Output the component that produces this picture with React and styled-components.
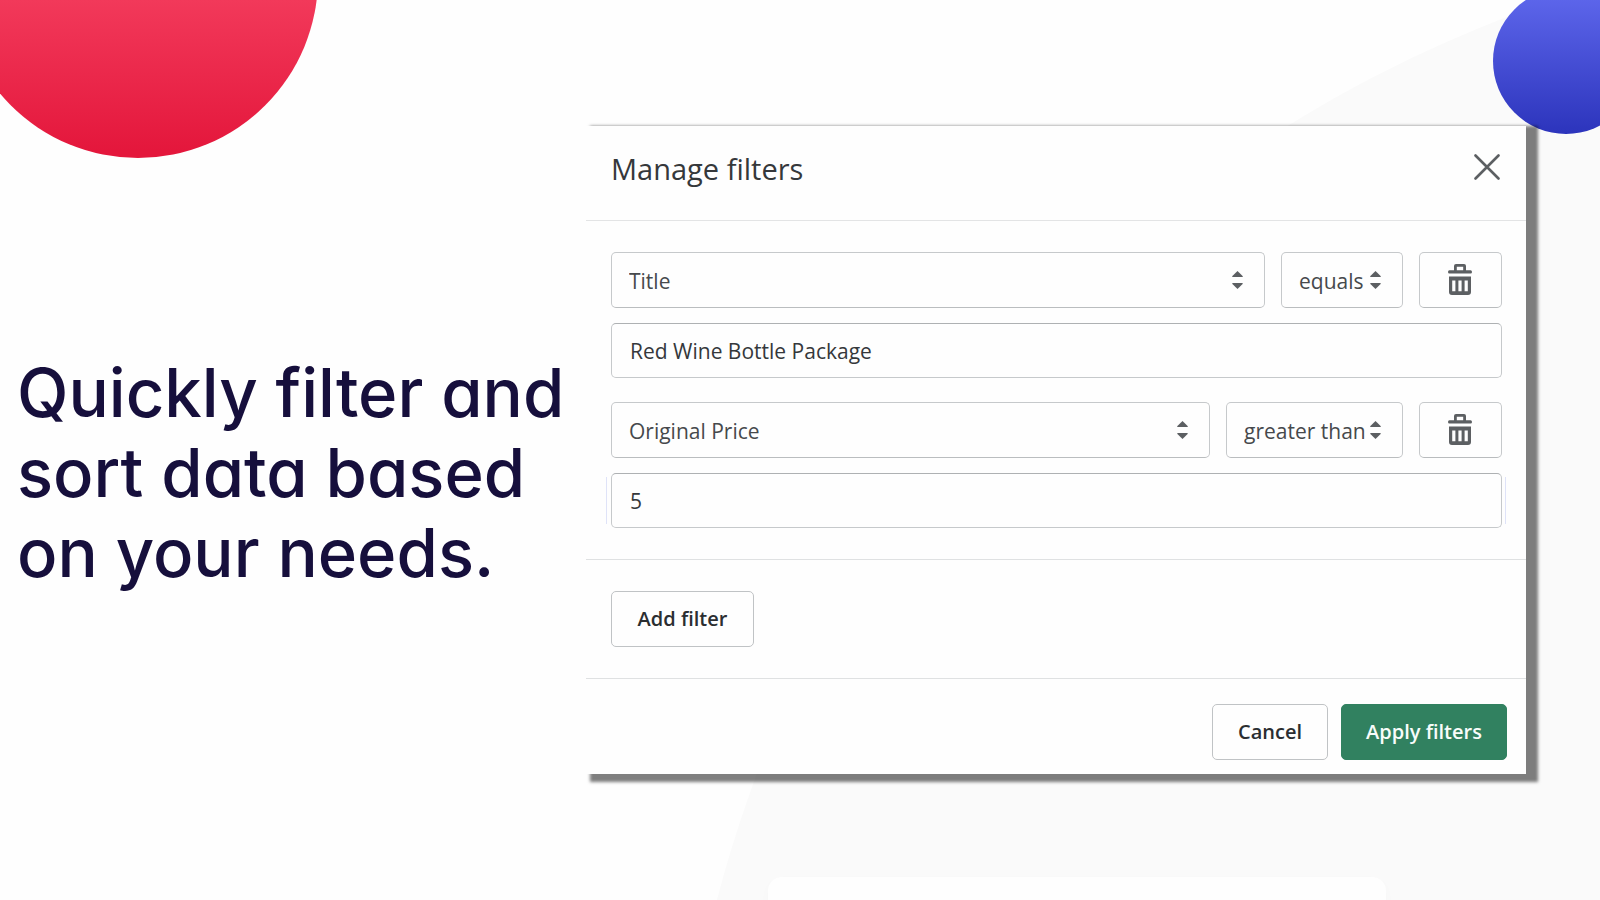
import React from "react";
import styled, { createGlobalStyle, css } from "styled-components";

const GlobalStyle = createGlobalStyle`
  *, *::before, *::after { box-sizing: border-box; }
  body { margin: 0; background: #fefefe; }
  button, input, select { font: inherit; color: inherit; margin: 0; }
`;

const Page = styled.main`
  position: relative;
  display: grid;
  grid-template-columns: 586px minmax(0, 1fr);
  min-height: 100vh;
  padding-right: 74px;
  overflow: hidden;
  font-family: "Open Sans", "Noto Sans", sans-serif;
  font-size: 21px;
  line-height: 28px;
  color: #35383b;
`;

const Disc = styled.div`
  position: absolute;
  border-radius: 50%;
`;

const PaleDisc = styled(Disc)`
  width: 2592px;
  height: 2592px;
  left: 675px;
  top: -69px;
  background: #fafafa;
`;

const RedDisc = styled(Disc)`
  width: 360px;
  height: 360px;
  left: -42px;
  top: -202px;
  background: linear-gradient(#ff5674 10%, #f2395a 56%, #e4173c 98%);
`;

const BlueDisc = styled(Disc)`
  width: 146px;
  height: 146px;
  right: -39px;
  top: -12px;
  background: linear-gradient(#6069ee, #2c34bc);
`;

const BlankCard = styled.div`
  position: absolute;
  left: 768px;
  right: 214px;
  bottom: -40px;
  height: 63px;
  border-radius: 14px;
  background: #fefefe;
  box-shadow: 0 4px 12px rgba(0, 0, 0, 0.02);
`;

const Headline = styled.h1`
  position: relative;
  align-self: center;
  margin: 0;
  padding: 46px 0 0 17px;
  font-family: Inter, sans-serif;
  font-size: 67px;
  font-weight: 500;
  font-feature-settings: "cv11" 1;
  line-height: 80px;
  white-space: nowrap;
  color: #160f3c;
`;

const Dialog = styled.section`
  position: relative;
  align-self: start;
  margin-top: 126px;
  background: #fefefe;
  box-shadow: 8px 4px 3px 4px rgba(0, 0, 0, 0.5);
`;

const Header = styled.header`
  display: flex;
  align-items: flex-start;
  justify-content: space-between;
  padding: 23px 24px 31px 25px;
  border-bottom: 1px solid #e3e4e5;
`;

const Title = styled.h2`
  margin: 0;
  font-size: 29px;
  font-weight: 400;
  line-height: 40px;
`;

const CloseButton = styled.button`
  display: grid;
  place-items: center;
  width: 30px;
  height: 36px;
  padding: 0;
  border: 0;
  background: none;
  color: #5c5f62;
`;

const FilterList = styled.div`
  display: grid;
  gap: 24px;
  padding: 31px 24px 31px 25px;
  border-bottom: 1px solid #dfe1e2;
`;

const Filter = styled.div`
  display: grid;
  gap: 15px;
`;

const FilterRow = styled.div`
  display: flex;
  gap: 16px;
`;

const box = css`
  height: 56px;
  border: 1px solid #c6c9cb;
  border-radius: 5px;
  background: #fefefe;
`;

const SelectBox = styled.label`
  position: relative;
  flex: ${(p) => (p.$width ? `0 0 ${p.$width}px` : "1 1 0")};
  min-width: 0;
`;

const Select = styled.select`
  ${box}
  display: block;
  width: 100%;
  padding: 1px 36px 0 17px;
  border-bottom-color: #babdbf;
  appearance: none;
  color: #46494c;
`;

const Arrows = styled.svg`
  position: absolute;
  right: 22px;
  top: 19px;
  pointer-events: none;
`;

const DeleteButton = styled.button`
  ${box}
  display: grid;
  place-items: center;
  flex: 0 0 83px;
  padding: 0 1px 1px 0;
  border-bottom-color: #b9bcbe;
  color: #5c5f62;
`;

const ValueBox = styled.label`
  position: relative;
  display: block;

  ${(p) =>
    p.$active &&
    css`
      &::before {
        content: "";
        position: absolute;
        inset: 4px -4px 4px -5px;
        border: solid #dfe3f8;
        border-width: 0 1px;
        pointer-events: none;
      }
    `}
`;

const ValueInput = styled.input`
  ${box}
  display: block;
  width: 100%;
  height: 55px;
  padding: 0 18px;
  border-top-color: #aeb1b3;
`;

const AddArea = styled.div`
  padding: 31px 25px;
  border-bottom: 1px solid #dfe1e2;
`;

const Footer = styled.footer`
  display: flex;
  justify-content: flex-end;
  gap: 13px;
  padding: 25px 19px 14px;
`;

const Button = styled.button`
  ${box}
  display: block;
  width: ${(p) => p.$width}px;
  padding: 0;
  border-color: ${(p) => (p.$primary ? "#318160" : "#c0c3c5")};
  background: ${(p) => (p.$primary ? "#318160" : "#fefefe")};
  color: ${(p) => (p.$primary ? "#f8fcfa" : "#2b2e31")};
  font-size: 20px;
  font-weight: 600;
  white-space: nowrap;
`;

function SelectField({ label, value, options, width }) {
  return (
    <SelectBox $width={width}>
      <Select aria-label={label} defaultValue={value}>
        {options.map((option) => (
          <option key={option}>{option}</option>
        ))}
      </Select>
      <Arrows width="11" height="18" viewBox="0 0 11 18" fill="#5c5f62" aria-hidden="true">
        <path d="M5.5 0 10.6 5.1q.5.9-.4.9H.8q-.9 0-.4-.9Z" />
        <path d="M5.5 18 .4 12.9Q-.1 12 .8 12h9.4q.9 0 .4.9Z" />
      </Arrows>
    </SelectBox>
  );
}

function TrashIcon() {
  return (
    <svg width="24" height="31" viewBox="0 0 24 31" fill="currentColor" aria-hidden="true">
      <path
        fillRule="evenodd"
        d="M8 0h8q2 0 2 2v4.3h4.6q1.4 0 1.4 1.6t-1.4 1.6H1.4Q0 9.5 0 7.9t1.4-1.6H6V2q0-2 2-2ZM8.8 2.8v3.5h6.4V2.8Z"
      />
      <path
        fillRule="evenodd"
        d="M1 12.5h22V28q0 3-3 3H4q-3 0-3-3ZM4.2 16.5v10.7h3.2V16.5ZM10.4 16.5v10.7h3.2V16.5ZM16.6 16.5v10.7h3.2V16.5Z"
      />
    </svg>
  );
}

const filters = [
  { field: "Title", operator: "equals", operatorWidth: 122, value: "Red Wine Bottle Package" },
  { field: "Original Price", operator: "greater than", operatorWidth: 177, value: "5", active: true },
];

export default function App() {
  return (
    <>
      <GlobalStyle />
      <Page>
        <PaleDisc />
        <BlankCard />
        <RedDisc />
        <BlueDisc />
        <Headline>
          Quickly filter and
          <br />
          sort data based
          <br />
          on your needs.
        </Headline>
        <Dialog aria-labelledby="dialog-title">
          <Header>
            <Title id="dialog-title">Manage filters</Title>
            <CloseButton type="button" aria-label="Close">
              <svg width="26" height="26" viewBox="0 0 26 26" fill="none" stroke="currentColor" strokeWidth="2.6" strokeLinecap="round" aria-hidden="true">
                <path d="M1.5 1.5l23 23M24.5 1.5l-23 23" />
              </svg>
            </CloseButton>
          </Header>
          <FilterList>
            {filters.map((f) => (
              <Filter key={f.field}>
                <FilterRow>
                  <SelectField label="Field" value={f.field} options={["Title", "Original Price"]} />
                  <SelectField
                    label="Condition"
                    value={f.operator}
                    options={["equals", "greater than"]}
                    width={f.operatorWidth}
                  />
                  <DeleteButton type="button" aria-label="Delete filter">
                    <TrashIcon />
                  </DeleteButton>
                </FilterRow>
                <ValueBox $active={f.active}>
                  <ValueInput type="text" aria-label={`${f.field} value`} defaultValue={f.value} />
                </ValueBox>
              </Filter>
            ))}
          </FilterList>
          <AddArea>
            <Button type="button" $width={143}>Add filter</Button>
          </AddArea>
          <Footer>
            <Button type="button" $width={116}>Cancel</Button>
            <Button type="button" $width={166} $primary>Apply filters</Button>
          </Footer>
        </Dialog>
      </Page>
    </>
  );
}
